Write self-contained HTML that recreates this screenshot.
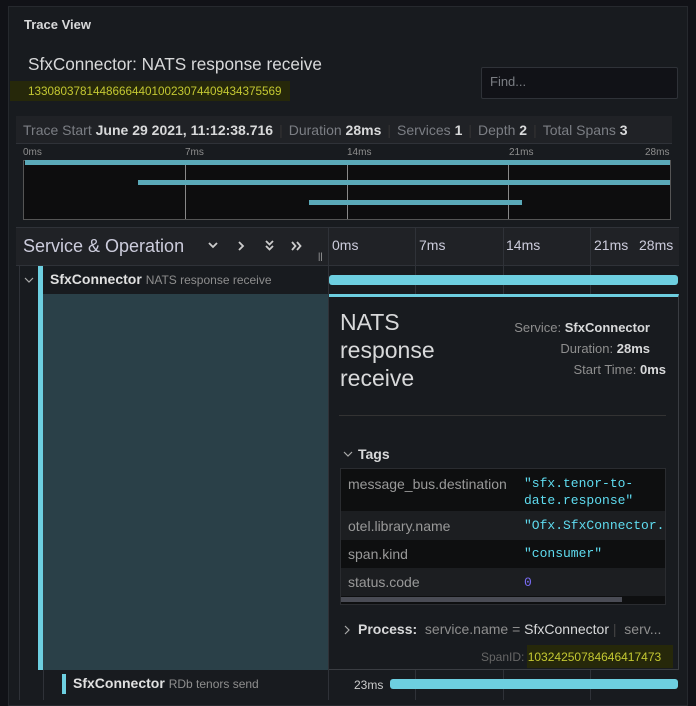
<!DOCTYPE html>
<html><head><meta charset="utf-8"><style>
*{box-sizing:border-box;margin:0;padding:0}
body{width:696px;height:700px;background:#111217;font-family:"Liberation Sans",sans-serif;color:#d8d9da;position:relative;overflow:hidden}
.a{position:absolute;white-space:nowrap}
.g{color:#8e8e8e}
.b{font-weight:bold;color:#d8d9da}
.s{color:#333;margin:0 6px}
.mono{font-family:"Liberation Mono",monospace}
</style></head><body>
<div class="a" style="left:8px;top:6px;width:680px;height:700px;background:#181b1f;border:1px solid #26292e"></div>
<div class="a b" style="left:24px;top:17px;font-size:13px">Trace View</div>
<div class="a" style="left:28px;top:54px;font-size:17.2px;color:#d8d9da">SfxConnector: NATS response receive</div>
<div class="a" style="left:10px;top:81px;width:280px;height:20px;background:#26280a"></div>
<div class="a" style="left:28px;top:85px;font-size:11.7px;color:#c4c832">13308037814486664401002307440943437​5569</div>
<div class="a" style="left:481px;top:67px;width:197px;height:32px;background:#111217;border:1px solid #2f3238;border-radius:2px"></div>
<div class="a g" style="left:490px;top:74px;font-size:13px;color:#7b7e84">Find...</div>
<div class="a" style="left:16px;top:116px;width:656px;height:28px;background:#202226;border-bottom:1px solid #2f3238"></div>
<div class="a g" style="left:23px;top:122px;font-size:14px;color:#7b7e84">Trace Start <span class="b">June 29 2021, 11:12:38.716</span><span class="s">|</span>Duration <span class="b">28ms</span><span class="s">|</span>Services <span class="b">1</span><span class="s">|</span>Depth <span class="b">2</span><span class="s">|</span>Total Spans <span class="b">3</span></div>
<div class="a g" style="left:23px;top:147px;font-size:10px">0ms</div>
<div class="a g" style="left:185px;top:147px;font-size:10px">7ms</div>
<div class="a g" style="left:347px;top:147px;font-size:10px">14ms</div>
<div class="a g" style="left:509px;top:147px;font-size:10px">21ms</div>
<div class="a g" style="left:645px;top:147px;font-size:10px">28ms</div>
<div class="a" style="left:23px;top:160px;width:648px;height:60px;background:#0d0d0e;border:1px solid #555"></div>
<div class="a" style="left:185px;top:161px;width:1px;height:58px;background:#888"></div>
<div class="a" style="left:347px;top:161px;width:1px;height:58px;background:#888"></div>
<div class="a" style="left:508px;top:161px;width:1px;height:58px;background:#888"></div>
<div class="a" style="left:25px;top:160px;width:645px;height:5px;background:#5aa9b8"></div>
<div class="a" style="left:138px;top:180px;width:532px;height:5px;background:#5aa9b8"></div>
<div class="a" style="left:309px;top:200px;width:213px;height:5px;background:#5aa9b8"></div>
<div class="a" style="left:16px;top:227px;width:663px;height:39px;background:#202226;border-top:1px solid #2f3238;border-bottom:1px solid #2f3238"></div>
<div class="a" style="left:23px;top:236px;font-size:18px;color:#ccccdc">Service &amp; Operation</div>
<svg class="a" style="left:206px;top:238px" width="100" height="16" fill="none" stroke="#ccc" stroke-width="1.8">
<path d="M3 5l4 4 4-4"/><path d="M33 4l4 4-4 4"/><path d="M60 3l3.5 3.5 3.5-3.5M60 8l3.5 3.5 3.5-3.5"/><path d="M86 4l3.5 4-3.5 4M91 4l3.5 4-3.5 4"/>
</svg>
<div class="a" style="left:318px;top:251px;font-size:9px;color:#aaa">||</div>
<div class="a" style="left:328px;top:228px;width:1px;height:472px;background:#2f3238"></div>
<div class="a" style="left:415px;top:228px;width:1px;height:38px;background:#2f3238"></div>
<div class="a" style="left:503px;top:228px;width:1px;height:38px;background:#2f3238"></div>
<div class="a" style="left:590px;top:228px;width:1px;height:38px;background:#2f3238"></div>
<div class="a" style="left:332px;top:237px;font-size:14px;color:#ccccdc">0ms</div>
<div class="a" style="left:419px;top:237px;font-size:14px;color:#ccccdc">7ms</div>
<div class="a" style="left:506px;top:237px;font-size:14px;color:#ccccdc">14ms</div>
<div class="a" style="left:594px;top:237px;font-size:14px;color:#ccccdc">21ms</div>
<div class="a" style="left:639px;top:237px;font-size:14px;color:#ccccdc">28ms</div>
<div class="a" style="left:19px;top:266px;width:1px;height:434px;background:#2f3238"></div>
<svg class="a" style="left:24px;top:276px" width="10" height="8" fill="none" stroke="#aaa" stroke-width="1.2"><path d="M1 2l4 4 4-4"/></svg>
<div class="a" style="left:38px;top:266px;width:5px;height:404px;background:#6dcfe0"></div>
<div class="a" style="left:50px;top:271px;font-size:14px;font-weight:bold;color:#e0e0e0">SfxConnector <span style="font-weight:normal;font-size:12px;color:#8e8e8e">NATS response receive</span></div>
<div class="a" style="left:415px;top:266px;width:1px;height:28px;background:#2f3238"></div>
<div class="a" style="left:503px;top:266px;width:1px;height:28px;background:#2f3238"></div>
<div class="a" style="left:590px;top:266px;width:1px;height:28px;background:#2f3238"></div>
<div class="a" style="left:329px;top:275px;width:349px;height:10px;background:#6dcfe0;border-radius:3px"></div>
<div class="a" style="left:43px;top:294px;width:285px;height:376px;background:#2a4048"></div>
<div class="a" style="left:329px;top:294px;width:350px;height:376px;background:#181b1f;border-top:3px solid #6dcfe0;border-right:1px solid #3a3d42;border-bottom:1px solid #3a3d42"></div>
<div class="a" style="left:340px;top:308px;font-size:23px;line-height:28px;color:#d8d9da;white-space:normal;width:120px">NATS response receive</div>
<div class="a g" style="right:46px;top:320px;font-size:13px;text-align:right">Service: <span class="b">SfxConnector</span></div>
<div class="a g" style="right:46px;top:341px;font-size:13px">Duration: <span class="b">28ms</span></div>
<div class="a g" style="right:30px;top:362px;font-size:13px">Start Time: <span class="b">0ms</span></div>
<div class="a" style="left:339px;top:415px;width:327px;height:1px;background:#333"></div>
<svg class="a" style="left:343px;top:450px" width="10" height="8" fill="none" stroke="#aaa" stroke-width="1.2"><path d="M1 2l4 4 4-4"/></svg>
<div class="a b" style="left:358px;top:446px;font-size:14px">Tags</div>
<div class="a" style="left:340px;top:468px;width:326px;height:137px;background:#0e0f10;border:1px solid #2a2c30"></div>
<div class="a" style="left:341px;top:511px;width:324px;height:29px;background:#1c1e21"></div>
<div class="a" style="left:341px;top:568px;width:324px;height:28px;background:#1c1e21"></div>
<div class="a" style="left:341px;top:597px;width:281px;height:5px;background:#4a4c55"></div>
<div class="a g" style="left:348px;top:476px;font-size:14px;color:#999">message_bus.destination</div>
<div class="a mono" style="left:524px;top:475px;font-size:13px;line-height:17px;color:#5fdcf0">"sfx.tenor-to-<br>date.response"</div>
<div class="a g" style="left:348px;top:518px;font-size:14px;color:#999">otel.library.name</div>
<div class="a mono" style="left:524px;top:518px;font-size:13px;color:#5fdcf0;width:141px;overflow:hidden">"Ofx.SfxConnector.Ho</div>
<div class="a g" style="left:348px;top:546px;font-size:14px;color:#999">span.kind</div>
<div class="a mono" style="left:524px;top:546px;font-size:13px;color:#5fdcf0">"consumer"</div>
<div class="a g" style="left:348px;top:574px;font-size:14px;color:#999">status.code</div>
<div class="a mono" style="left:524px;top:575px;font-size:13px;color:#7a6cf5">0</div>
<svg class="a" style="left:343px;top:625px" width="8" height="10" fill="none" stroke="#aaa" stroke-width="1.2"><path d="M2 1l4 4-4 4"/></svg>
<div class="a g" style="left:358px;top:621px;font-size:14px"><span class="b">Process:</span> &nbsp;service.name = <span style="color:#d8d9da">SfxConnector</span> <span style="color:#444">|</span> &nbsp;serv...</div>
<div class="a" style="left:527px;top:645px;width:146px;height:23px;background:#26280a"></div>
<div class="a g" style="left:481px;top:650px;font-size:12px;color:#666">SpanID: <span style="color:#c4c832">10324250784646417473</span></div>
<div class="a" style="left:43px;top:670px;width:1px;height:30px;background:#2f3238"></div>
<div class="a" style="left:62px;top:674px;width:4px;height:20px;background:#6dcfe0"></div>
<div class="a" style="left:73px;top:675px;font-size:14px;font-weight:bold;color:#e0e0e0">SfxConnector <span style="font-weight:normal;font-size:12px;color:#8e8e8e">RDb tenors send</span></div>
<div class="a" style="left:415px;top:670px;width:1px;height:30px;background:#2f3238"></div>
<div class="a" style="left:503px;top:670px;width:1px;height:30px;background:#2f3238"></div>
<div class="a" style="left:590px;top:670px;width:1px;height:30px;background:#2f3238"></div>
<div class="a" style="left:354px;top:678px;font-size:12px;color:#ccc">23ms</div>
<div class="a" style="left:390px;top:679px;width:288px;height:10px;background:#6dcfe0;border-radius:3px"></div>
</body></html>
